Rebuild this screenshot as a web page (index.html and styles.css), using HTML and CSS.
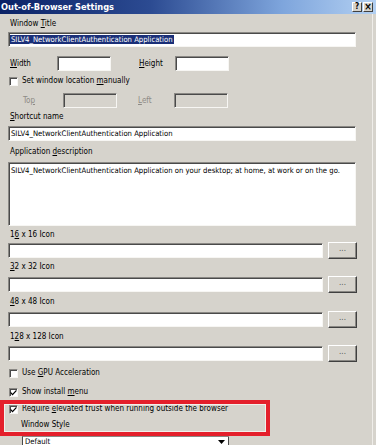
FILE: index.html
```html
<!DOCTYPE html>
<html>
<head>
<meta charset="utf-8">
<link rel="stylesheet" href="styles.css">
</head>
<body>
<div class="window">
  <div class="titlebar">
    <span class="title">Out-of-Browser Settings</span>
    <div class="tb-buttons">
      <span class="tbtn">?</span>
      <span class="tbtn x">×</span>
    </div>
  </div>
  <div class="content">
    <div class="label m-wtitle">Window <u>T</u>itle</div>
    <div class="input full m-tinput"><span class="sel">SILV4_NetworkClientAuthentication Application</span></div>

    <div class="row m-size">
      <span class="label lab-w"><u>W</u>idth</span>
      <div class="input small"></div>
      <span class="label lab-h"><u>H</u>eight</span>
      <div class="input small"></div>
    </div>

    <div class="check-row m-loc">
      <span class="cb"></span>
      <span class="label">Set window location <u>m</u>anually</span>
    </div>

    <div class="row m-pos">
      <span class="label dis lab-top">To<u>p</u></span>
      <div class="input small disabled"></div>
      <span class="label dis lab-left"><u>L</u>eft</span>
      <div class="input small disabled"></div>
    </div>

    <div class="label m-short"><u>S</u>hortcut name</div>
    <div class="input full m-sinput">SILV4_NetworkClientAuthentication Application</div>

    <div class="label m-desc">Application <u>d</u>escription</div>
    <div class="input full area m-area">SILV4_NetworkClientAuthentication Application on your desktop; at home, at work or on the go.</div>

    <div class="label m-i16">1<u>6</u> x 16 Icon</div>
    <div class="icon-row m-r16"><div class="input icon"></div><span class="btn">...</span></div>

    <div class="label m-i32"><u>3</u>2 x 32 Icon</div>
    <div class="icon-row m-r32"><div class="input icon"></div><span class="btn">...</span></div>

    <div class="label m-i48"><u>4</u>8 x 48 Icon</div>
    <div class="icon-row m-r48"><div class="input icon"></div><span class="btn">...</span></div>

    <div class="label m-i128">1<u>2</u>8 x 128 Icon</div>
    <div class="icon-row m-r128"><div class="input icon"></div><span class="btn">...</span></div>

    <div class="check-row m-gpu">
      <span class="cb"></span>
      <span class="label">Use <u>G</u>PU Acceleration</span>
    </div>

    <div class="check-row m-inst">
      <span class="cb"><svg viewBox="0 0 9 9" width="9" height="9"><path d="M1.5 3.5 L3.5 5.8 L7.5 1.5 L7.5 3.2 L3.5 7.5 L1.5 5.2 Z" fill="#000"/></svg></span>
      <span class="label">Show install <u>m</u>enu</span>
    </div>

    <div class="check-row m-trust">
      <span class="cb"><svg viewBox="0 0 9 9" width="9" height="9"><path d="M1.5 3.5 L3.5 5.8 L7.5 1.5 L7.5 3.2 L3.5 7.5 L1.5 5.2 Z" fill="#000"/></svg></span>
      <span class="label">Require <u>e</u>levated trust when running outside the browser</span>
    </div>

    <div class="label m-style">Window Style</div>
    <div class="select m-select">
      <span class="sel-text">Default</span>
      <span class="sel-arrow"><svg viewBox="0 0 7 4" width="7" height="4"><path d="M0 0 H7 L3.5 4 Z" fill="#000"/></svg></span>
    </div>
  </div>
  <div class="highlight"></div>
</div>
</body>
</html>
```

FILE: styles.css
```css
html, body {
  margin: 0;
  padding: 0;
}
body {
  width: 376px;
  height: 445px;
  overflow: hidden;
  background: #d6d3cc;
  font-family: "DejaVu Sans Condensed", "DejaVu Sans", sans-serif;
  font-stretch: semi-condensed;
  font-size: 8px;
  color: #000;
}
.window {
  position: relative;
  width: 376px;
  height: 445px;
  overflow: hidden;
}
.titlebar {
  height: 14px;
  display: flex;
  align-items: center;
  justify-content: space-between;
  background: linear-gradient(to right, #0b2266 0%, #2c4b92 40%, #7ea5dc 75%, #b3d0f2 100%);
}
.title {
  color: #fff;
  font-weight: bold;
  font-size: 9.2px;
  padding-left: 1px;
  line-height: 14px;
}
.tb-buttons {
  display: flex;
  gap: 1px;
  padding-right: 3px;
}
.tbtn {
  width: 10px;
  height: 10px;
  box-sizing: border-box;
  background: #d6d3cc;
  border: 1px solid;
  border-color: #ffffff #404040 #404040 #ffffff;
  font-weight: bold;
  font-size: 8px;
  line-height: 8px;
  text-align: center;
}
.tbtn.x {
  font-size: 10px;
}
.content {
  display: flex;
  flex-direction: column;
  padding-left: 8px;
  width: 364px;
  border-right: 1px solid #efede9;
  min-height: 431px;
}
.content > * {
  flex-shrink: 0;
}
.label {
  box-sizing: border-box;
  line-height: 12px;
  height: 12px;
  white-space: nowrap;
  padding-left: 2px;
}
.label u {
  text-decoration: underline;
}
.dis {
  color: #8d8a85;
}
.input {
  box-sizing: border-box;
  background: #fff;
  border: 1px solid;
  border-color: #8a8884 #f7f6f3 #f7f6f3 #8a8884;
  box-shadow: inset 1px 1px 0 #4a4a4a;
  height: 15px;
  line-height: 12px;
  padding: 1px 2px 0 2px;
  white-space: nowrap;
  overflow: hidden;
  font-size: 7.65px;
}
.full {
  width: 348px;
}
.sel {
  background: #1a2f78;
  color: #fff;
  margin-left: -1px;
  padding: 0 1px;
}
.small {
  width: 54px;
}
.disabled {
  background: #d6d3cc;
}
.row {
  display: flex;
  align-items: center;
  height: 15px;
}
.lab-w {
  width: 49px;
  padding-left: 2px;
}
.lab-h {
  width: 64px;
  padding-left: 28px;
}
.lab-top {
  width: 55px;
  padding-left: 15px;
}
.lab-left {
  width: 57px;
  padding-left: 21px;
}
.check-row {
  display: flex;
  align-items: center;
  height: 12px;
}
.check-row .label {
  padding-left: 4px;
}
.cb {
  width: 9px;
  height: 9px;
  box-sizing: border-box;
  background: #fff;
  border: 1px solid;
  border-color: #8a8884 #f7f6f3 #f7f6f3 #8a8884;
  box-shadow: inset 1px 1px 0 #4a4a4a;
  margin-left: 1px;
  position: relative;
}
.cb svg {
  position: absolute;
  left: -1px;
  top: -1px;
}
.area {
  height: 64px;
  white-space: normal;
  padding: 2px 2px;
}
.icon-row {
  display: flex;
  align-items: center;
  height: 17px;
}
.icon {
  width: 315px;
}
.btn {
  box-sizing: border-box;
  width: 29px;
  height: 17px;
  margin-left: 5px;
  background: #d6d3cc;
  border: 1px solid;
  border-color: #ffffff #404040 #404040 #ffffff;
  box-shadow: inset -1px -1px 0 #8a8884;
  text-align: center;
  line-height: 12px;
  font-size: 8px;
  color: #555;
}
.select {
  box-sizing: border-box;
  display: flex;
  align-items: flex-start;
  justify-content: space-between;
  width: 207px;
  height: 15px;
  margin-left: 14px;
  background: #fff;
  border-left: 1px solid #4a4a4a;
  border-top: 1px solid #8a8884;
}
.sel-text {
  padding-left: 2px;
  line-height: 9px;
  font-size: 7.65px;
}
.sel-arrow {
  display: flex;
  align-items: flex-start;
  justify-content: center;
  padding-top: 3px;
  box-sizing: border-box;
  width: 14px;
  height: 100%;
  border-right: 1px solid #4a4a4a;
}
.highlight {
  position: absolute;
  left: 0;
  top: 400px;
  width: 270px;
  height: 36px;
  box-sizing: border-box;
  border: 4px solid #e41f2b;
  box-shadow: inset 0 0 0 1px #f2efea;
}

/* vertical rhythm */
.m-wtitle { margin-top: 4px; }
.m-tinput { margin-top: 2px; }
.m-size { margin-top: 9px; }
.m-loc { margin-top: 4px; }
.m-pos { margin-top: 6px; }
.m-short { margin-top: 3px; }
.m-sinput { margin-top: 3px; }
.m-desc { margin-top: 5px; }
.m-area { margin-top: 4px; }
.m-i16 { margin-top: 3px; }
.m-r16 { margin-top: 1px; }
.m-i32 { margin-top: 2px; }
.m-r32 { margin-top: 3px; }
.m-i48 { margin-top: 3px; }
.m-r48 { margin-top: 3px; }
.m-i128 { margin-top: 3px; }
.m-r128 { margin-top: 2px; }
.m-gpu { margin-top: 5px; }
.m-inst { margin-top: 7px; }
.m-trust { margin-top: 5px; }
.m-style { margin-top: 4px; padding-left: 13px; }
.m-select { margin-top: 5px; }
```
